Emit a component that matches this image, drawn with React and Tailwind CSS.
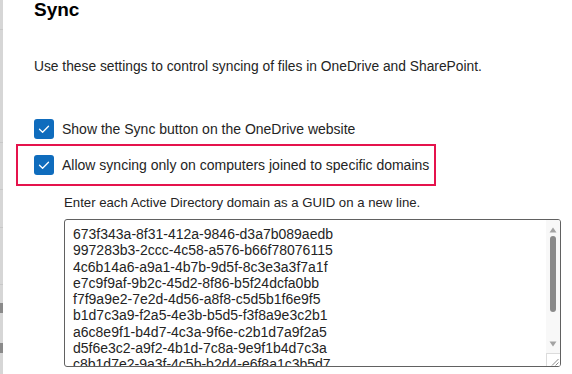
import React from 'react';

const guids = [
  '673f343a-8f31-412a-9846-d3a7b089aedb',
  '997283b3-2ccc-4c58-a576-b66f78076115',
  '4c6b14a6-a9a1-4b7b-9d5f-8c3e3a3f7a1f',
  'e7c9f9af-9b2c-45d2-8f86-b5f24dcfa0bb',
  'f7f9a9e2-7e2d-4d56-a8f8-c5d5b1f6e9f5',
  'b1d7c3a9-f2a5-4e3b-b5d5-f3f8a9e3c2b1',
  'a6c8e9f1-b4d7-4c3a-9f6e-c2b1d7a9f2a5',
  'd5f6e3c2-a9f2-4b1d-7c8a-9e9f1b4d7c3a',
  'c8b1d7e2-9a3f-4c5b-b2d4-e6f8a1c3b5d7',
];

function Checkbox() {
  return (
    <div className="w-[20px] h-[20px] rounded-[3px] bg-[#0f6cbd] flex items-center justify-center shrink-0">
      <svg width="20" height="20" viewBox="0 0 20 20" fill="none">
        <path d="M5.5 10.2 L8.6 13.2 L14.5 7.3" stroke="white" strokeWidth="1.3" strokeLinecap="round" strokeLinejoin="round" />
      </svg>
    </div>
  );
}

export default function App() {
  return (
    <div className="w-[572px] h-[374px] overflow-hidden bg-white flex text-[#242424]" style={{ fontFamily: '"Liberation Sans", Arial, sans-serif' }}>
      {/* left edge of the previous pane */}
      <div className="w-[3px] h-full bg-[#d6d6d6] flex flex-col shrink-0">
        <div className="h-[30px] border-b border-[#c8c8c8]" />
        <div className="h-[113px] border-b border-[#c8c8c8]" />
        <div className="h-[47px] border-b border-[#c8c8c8]" />
        <div className="h-[38px] border-b border-[#c8c8c8]" />
        <div className="h-[57px] border-b border-[#c8c8c8]" />
        <div className="h-[18px]" />
        <div className="h-[10px] bg-[#8a8a8a]" />
        <div className="h-[30px]" />
        <div className="h-[10px] bg-[#8a8a8a]" />
      </div>

      <div className="flex-1 pl-[31px] flex flex-col">
        <h1 className="text-[19px] leading-[20px] font-bold text-black">Sync</h1>

        <p className="mt-[37px] text-[13.8px] leading-[20px]">
          Use these settings to control syncing of files in OneDrive and SharePoint.
        </p>

        <div className="mt-[42px] flex items-center gap-[8px] h-[20px]">
          <Checkbox />
          <span className="text-[14px] leading-[20px]">Show the Sync button on the OneDrive website</span>
        </div>

        <div className="mt-[5px] -ml-[18px] w-fit h-[42px] border-2 border-[#e5134c] flex items-center gap-[8px] pl-[16px] pr-[5px]">
          <Checkbox />
          <span className="text-[14px] leading-[20px]">Allow syncing only on computers joined to specific domains</span>
        </div>

        <div className="pl-[30px] flex flex-col">
          <p className="mt-[7px] text-[13.2px] leading-[20px]">
            Enter each Active Directory domain as a GUID on a new line.
          </p>

          <div className="mt-[6px] w-[497px] h-[148px] border border-[#616161] rounded-[3px] flex overflow-hidden">
            <div className="flex-1 pl-[8px] pt-[6px] overflow-hidden">
              {guids.map((g) => (
                <div key={g} className="text-[14px] leading-[16.3px] whitespace-nowrap">{g}</div>
              ))}
            </div>
            <div className="w-[14px] bg-[#f8f8f8] flex flex-col items-center">
              <svg width="8" height="6" viewBox="0 0 8 6" className="mt-[7px]">
                <path d="M4 0.5 L7.5 5.5 L0.5 5.5 Z" fill="#a3a3a3" />
              </svg>
              <div className="mt-[3px] w-[6px] h-[76px] rounded-full bg-[#8a8a8a]" />
              <div className="flex-1" />
              <svg width="8" height="6" viewBox="0 0 8 6" className="mb-[6px]">
                <path d="M0.5 0.5 L7.5 0.5 L4 5.5 Z" fill="#a3a3a3" />
              </svg>
              <div className="w-[14px] h-[13px] border-t border-l border-[#dcdcdc] bg-white relative">
                <svg width="13" height="12" viewBox="0 0 13 12" className="absolute right-0 bottom-0">
                  <path d="M11.5 5 L5 11.5 M11.5 8.5 L8.5 11.5" stroke="#8a8a8a" strokeWidth="1" />
                </svg>
              </div>
            </div>
          </div>
        </div>
      </div>
    </div>
  );
}
